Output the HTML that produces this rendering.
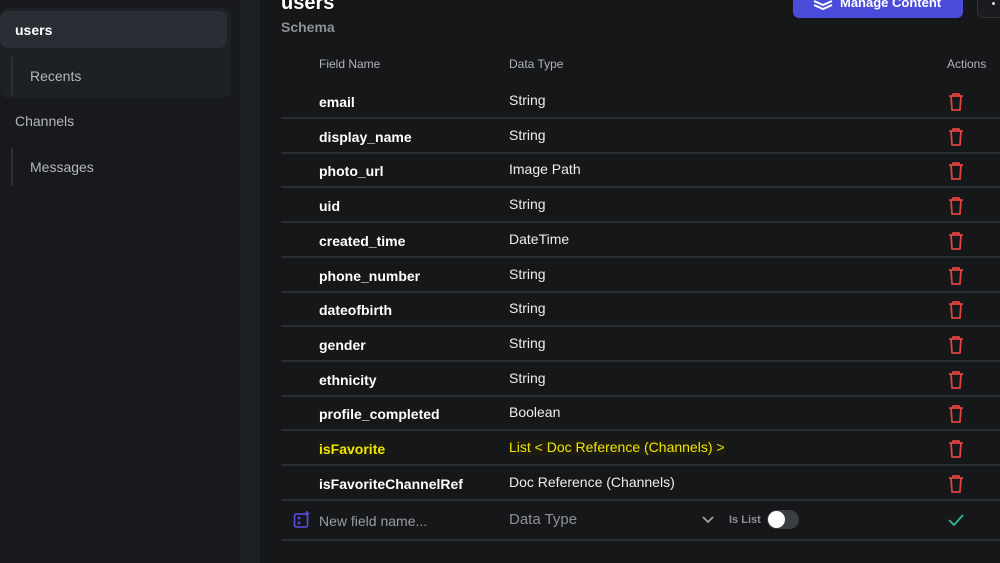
<!DOCTYPE html>
<html><head><style>
*{margin:0;padding:0;box-sizing:border-box}
body{width:1000px;height:563px;background:#151719;font-family:"Liberation Sans",sans-serif;position:relative;overflow:hidden;color:#fff}
.sb{position:absolute;left:0;top:0;width:240px;height:563px;background:#17191c}
.strip{position:absolute;left:240px;top:0;width:20px;height:563px;background:#1c1f23}
.grp{position:absolute;left:0;top:8px;width:231px;height:90px;background:#1d2024;border-radius:8px}
.sel{position:absolute;left:0;top:11px;width:227px;height:37px;background:#2a2e34;border-radius:8px}
.t{position:absolute;font-size:14px}
.vl{position:absolute;left:11px;width:2px;background:#2c3036}
.row{position:absolute;left:281px;width:719px;height:35px;border-bottom:2px solid #2a2d31}
.fn{position:absolute;left:38px;top:10px;font-weight:bold;font-size:14px;color:#fff}
.dt{position:absolute;left:228px;top:8px;font-size:14px;color:#eee}
.tr{position:absolute;left:666px;top:8px}
.hd{position:absolute;font-size:12px;color:#b0b3b8;top:57px}
.y{color:#f2e600;background:#1c1c10}
</style></head><body>
<svg width="0" height="0" style="position:absolute"><defs><g id="tr"><path d="M2 4h14M6 4V2h6v2M4 4l1 14h8l1-14" stroke="#e0443e" stroke-width="1.8" fill="none" stroke-linejoin="round"/></g></defs></svg>
<div class="sb"></div><div class="strip"></div>
<div class="grp"></div><div class="sel"></div>
<div class="t" style="left:15px;top:22px;font-weight:bold;font-size:14px">users</div>
<div class="vl" style="top:57px;height:38px"></div>
<div class="t" style="left:30px;top:68px;color:#b4b7bc">Recents</div>
<div class="t" style="left:15px;top:113px;color:#b4b7bc">Channels</div>
<div class="vl" style="top:148px;height:38px"></div>
<div class="t" style="left:30px;top:159px;color:#b4b7bc">Messages</div>
<div class="t" style="left:281px;top:-8px;font-size:20px;font-weight:bold">users</div>
<div class="t" style="left:281px;top:19px;font-size:14px;color:#8d9096;font-weight:bold">Schema</div>
<div style="position:absolute;left:793px;top:-10px;width:170px;height:28px;background:#4b4bd9;border-radius:6px"></div>
<svg style="position:absolute;left:812px;top:-4px" width="22" height="16" viewBox="0 0 22 16"><path d="M2 5l9 4 9-4M2 9l9 4 9-4" stroke="#fff" stroke-width="2" fill="none"/></svg>
<div class="t" style="left:840px;top:-5px;font-weight:bold;font-size:13px">Manage Content</div>
<div style="position:absolute;left:977px;top:-10px;width:30px;height:28px;border:1px solid #333;border-radius:6px;background:#1a1c1f"></div>
<div style="position:absolute;left:992px;top:2px;width:3px;height:3px;background:#ddd;border-radius:2px"></div>
<div style="position:absolute;left:992px;top:-4px;width:3px;height:3px;background:#ddd;border-radius:2px"></div>
<div class="hd" style="left:319px">Field Name</div>
<div class="hd" style="left:509px">Data Type</div>
<div class="hd" style="left:947px">Actions</div>

<div class="row" style="top:84px"><div class="fn">email</div><div class="dt">String</div><svg class="tr" width="18" height="20"><use href="#tr"/></svg></div>
<div class="row" style="top:119px"><div class="fn">display_name</div><div class="dt">String</div><svg class="tr" width="18" height="20"><use href="#tr"/></svg></div>
<div class="row" style="top:153px"><div class="fn">photo_url</div><div class="dt">Image Path</div><svg class="tr" width="18" height="20"><use href="#tr"/></svg></div>
<div class="row" style="top:188px"><div class="fn">uid</div><div class="dt">String</div><svg class="tr" width="18" height="20"><use href="#tr"/></svg></div>
<div class="row" style="top:223px"><div class="fn">created_time</div><div class="dt">DateTime</div><svg class="tr" width="18" height="20"><use href="#tr"/></svg></div>
<div class="row" style="top:258px"><div class="fn">phone_number</div><div class="dt">String</div><svg class="tr" width="18" height="20"><use href="#tr"/></svg></div>
<div class="row" style="top:292px"><div class="fn">dateofbirth</div><div class="dt">String</div><svg class="tr" width="18" height="20"><use href="#tr"/></svg></div>
<div class="row" style="top:327px"><div class="fn">gender</div><div class="dt">String</div><svg class="tr" width="18" height="20"><use href="#tr"/></svg></div>
<div class="row" style="top:362px"><div class="fn">ethnicity</div><div class="dt">String</div><svg class="tr" width="18" height="20"><use href="#tr"/></svg></div>
<div class="row" style="top:396px"><div class="fn">profile_completed</div><div class="dt">Boolean</div><svg class="tr" width="18" height="20"><use href="#tr"/></svg></div>
<div class="row" style="top:431px"><div class="fn y">isFavorite</div><div class="dt y">List &lt; Doc Reference (Channels) &gt;</div><svg class="tr" width="18" height="20"><use href="#tr"/></svg></div>
<div class="row" style="top:466px"><div class="fn">isFavoriteChannelRef</div><div class="dt">Doc Reference (Channels)</div><svg class="tr" width="18" height="20"><use href="#tr"/></svg></div>

<div style="position:absolute;left:281px;top:539px;width:719px;height:2px;background:#2a2d31"></div>
<svg style="position:absolute;left:293px;top:511px" width="18" height="18" viewBox="0 0 18 18"><rect x="1.5" y="3" width="13" height="13" rx="2" stroke="#5b4ee6" stroke-width="1.6" fill="none"/><circle cx="6" cy="7" r="1.4" fill="#5b4ee6"/><circle cx="6" cy="12" r="1.4" fill="#5b4ee6"/><path d="M14 0v5M11.5 2.5h5" stroke="#5b4ee6" stroke-width="1.4"/></svg>
<div class="t" style="left:319px;top:513px;color:#9a9da2">New field name...</div>
<div class="t" style="left:509px;top:511px;color:#8d9096;font-size:15px">Data Type</div>
<svg style="position:absolute;left:701px;top:515px" width="14" height="10"><path d="M2 2l5 5 5-5" stroke="#aaa" stroke-width="1.6" fill="none"/></svg>
<div class="t" style="left:729px;top:514px;font-size:11px;font-weight:bold;color:#8d9096">Is List</div>
<div style="position:absolute;left:767px;top:510px;width:32px;height:19px;background:#3a3d42;border-radius:10px"></div>
<div style="position:absolute;left:768px;top:511px;width:17px;height:17px;background:#fff;border-radius:50%"></div>
<svg style="position:absolute;left:947px;top:512px" width="18" height="16"><path d="M2 8l5 5 9-10" stroke="#34b89a" stroke-width="1.8" fill="none"/></svg>
</body></html>
